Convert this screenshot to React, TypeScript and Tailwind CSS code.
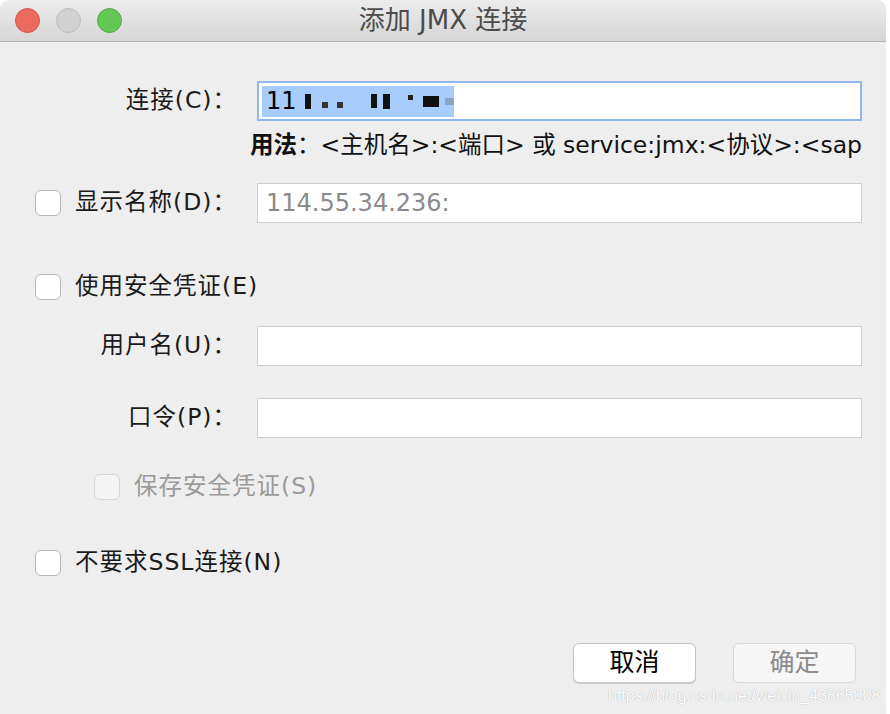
import React from 'react'

const font = { fontFamily: '"DejaVu Sans", "Noto Sans CJK SC", sans-serif' }

function Checkbox({ disabled }: { disabled?: boolean }) {
  return (
    <span
      className={
        'inline-block w-[26px] h-[26px] rounded-[6px] border shrink-0 ' +
        (disabled ? 'bg-[#f4f4f4] border-[#d6d6d6]' : 'bg-white border-[#b7b7b7]')
      }
    />
  )
}

function Field({ children }: { children?: React.ReactNode }) {
  return (
    <div className="ml-[20px] w-[605px] h-[40px] bg-white border border-[#cdcdcd] flex items-center px-[8px]">
      {children}
    </div>
  )
}

function Label({ text }: { text: string }) {
  return (
    <div className="w-[237px] text-right text-[23.5px] tracking-[1px] text-[#1a1a1a] whitespace-nowrap">{text}</div>
  )
}

export default function App() {
  return (
    <div className="w-[890px] h-[714px] bg-white overflow-hidden" style={font}>
      <div className="relative w-[886px] h-[714px] bg-[#eeeeee] rounded-t-[9px] overflow-hidden">
        {/* title bar */}
        <div className="relative h-[42px] bg-gradient-to-b from-[#ececec] to-[#d6d6d6] border-b border-[#b3b3b3] flex items-center">
          <div className="flex items-center gap-[16px] pl-[15px]">
            <span className="w-[25px] h-[25px] rounded-full bg-[#ec6b5f] border border-[#d4534a]" />
            <span className="w-[25px] h-[25px] rounded-full bg-[#d1d1d1] border border-[#bdbdbd]" />
            <span className="w-[25px] h-[25px] rounded-full bg-[#63c655] border border-[#52ab43]" />
          </div>
          <div className="absolute inset-0 flex items-center justify-center text-[26px] text-[#4b4b4b]">
            添加 JMX 连接
          </div>
        </div>

        <div className="flex flex-col">
          {/* connect */}
          <div className="mt-[39px] h-[40px] flex items-center">
            <Label text="连接(C)：" />
            <div className="ml-[20px] w-[605px] h-[40px] bg-white border-2 border-[#8fb8ef] flex items-center px-[3px]">
              <div className="h-[31px] w-[192px] bg-[#a7cdfd] flex items-center pl-[4px] text-[24px] text-black">
                <span>11</span>
                <span className="ml-[8px] w-[7px] h-[15px] bg-[#111]" />
                <span className="ml-[11px] mt-[8px] w-[6px] h-[6px] bg-[#333]" />
                <span className="ml-[9px] mt-[8px] w-[6px] h-[6px] bg-[#333]" />
                <span className="ml-[28px] w-[6px] h-[14px] bg-[#111]" />
                <span className="ml-[6px] w-[7px] h-[15px] bg-[#111]" />
                <span className="ml-[18px] -mt-[8px] w-[5px] h-[5px] bg-[#222]" />
                <span className="ml-[10px] w-[16px] h-[11px] bg-[#111]" />
                <span className="ml-[6px] w-[9px] h-[7px] bg-[#8aa4c6]" />
              </div>
            </div>
          </div>

          {/* usage */}
          <div className="mt-[10px] h-[30px] pl-[250px] flex items-center text-[23.5px] text-[#111] whitespace-nowrap">
            <span className="font-bold">用法</span>
            <span>：&lt;主机名&gt;:&lt;端口&gt; 或 service:jmx:&lt;协议&gt;:&lt;sap</span>
          </div>

          {/* display name */}
          <div className="mt-[22px] h-[40px] flex items-center">
            <div className="w-[237px] flex items-center pl-[35px]">
              <Checkbox />
              <span className="ml-[14px] text-[23.5px] tracking-[1px] text-[#1a1a1a] whitespace-nowrap">显示名称(D)：</span>
            </div>
            <Field>
              <span className="text-[24px] text-[#8a8a8a]">114.55.34.236:</span>
            </Field>
          </div>

          {/* credentials */}
          <div className="mt-[44px] h-[40px] flex items-center pl-[35px]">
            <Checkbox />
            <span className="ml-[14px] text-[23.5px] tracking-[1px] text-[#1a1a1a]">使用安全凭证(E)</span>
          </div>

          <div className="mt-[19px] h-[40px] flex items-center">
            <Label text="用户名(U)：" />
            <Field />
          </div>

          <div className="mt-[32px] h-[40px] flex items-center">
            <Label text="口令(P)：" />
            <Field />
          </div>

          <div className="mt-[29px] h-[40px] flex items-center pl-[94px]">
            <Checkbox disabled />
            <span className="ml-[14px] text-[23.5px] tracking-[1px] text-[#9a9a9a]">保存安全凭证(S)</span>
          </div>

          <div className="mt-[36px] h-[40px] flex items-center pl-[35px]">
            <Checkbox />
            <span className="ml-[14px] text-[23.5px] tracking-[1px] text-[#1a1a1a]">不要求SSL连接(N)</span>
          </div>

          {/* buttons */}
          <div className="mt-[60px] flex justify-end gap-[37px] pr-[30px]">
            <button className="w-[123px] h-[40px] rounded-[6px] bg-white border border-[#c4c4c4] shadow-[0_1px_1px_rgba(0,0,0,0.15)] text-[25px] text-black">
              取消
            </button>
            <button className="w-[123px] h-[40px] rounded-[6px] bg-[#f6f6f6] border border-[#d8d8d8] text-[25px] text-[#8b8b8b]">
              确定
            </button>
          </div>
        </div>

        <div
          className="absolute left-[608px] top-[684px] text-[16px] text-white whitespace-nowrap [text-shadow:0_0_1px_rgba(0,0,0,0.35)]"
          style={{ fontFamily: '"Liberation Sans", Arial, sans-serif' }}
        >
          https://blog.csdn.net/weixin_43865008
        </div>
      </div>
    </div>
  )
}
